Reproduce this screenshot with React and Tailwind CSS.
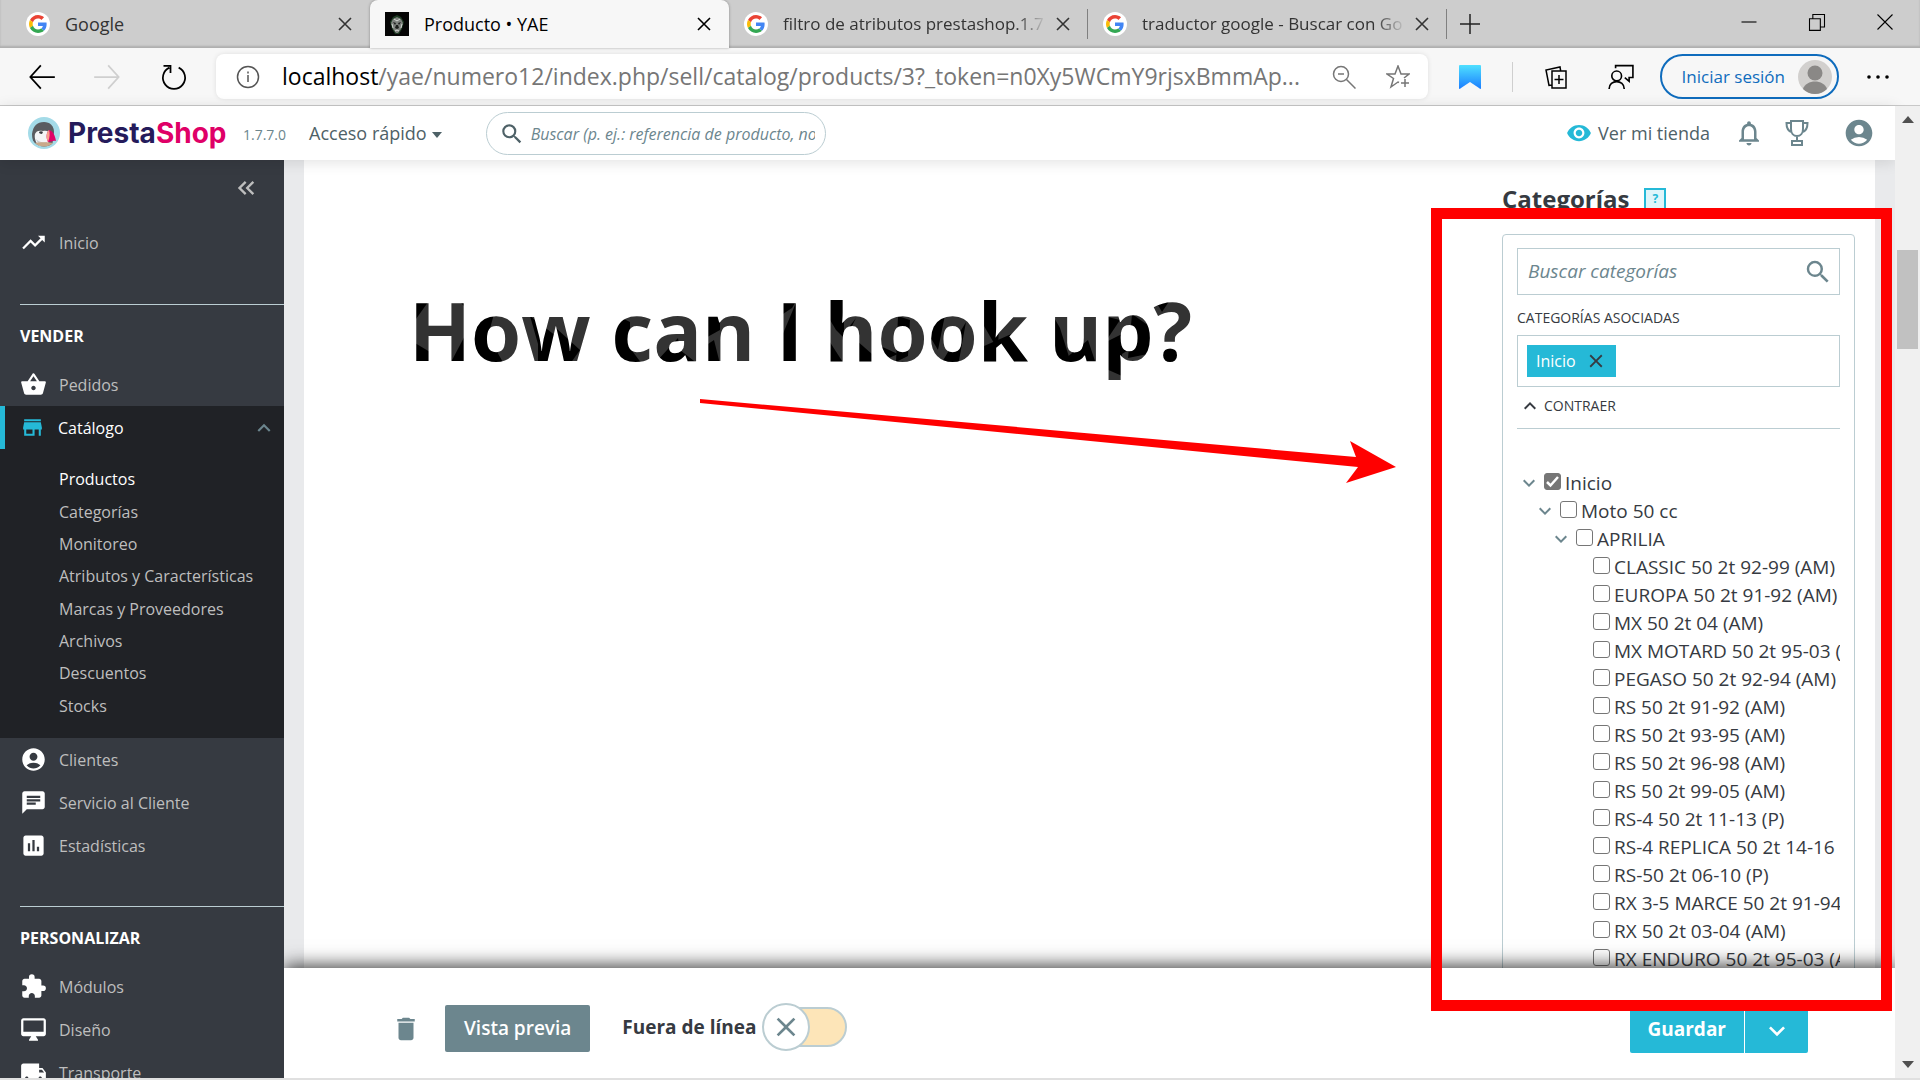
import React from "react";
import {
  MdTrendingUp, MdShoppingBasket, MdStore, MdAccountCircle, MdChat, MdAssessment, MdExtension,
  MdLocalShipping, MdKeyboardArrowUp, MdKeyboardArrowDown, MdSearch, MdVisibility,
  MdDelete, MdClose, MdNotificationsNone, MdKeyboardDoubleArrowLeft,
} from "react-icons/md";

function GoogleIcon() {
  return (
    <svg viewBox="0 0 24 24" className="size-6 shrink-0" aria-hidden="true">
      <circle cx="12" cy="12" r="12" fill="#fff" />
      <g transform="translate(3 3) scale(0.375)">
        <path fill="#EA4335" d="M24 9.5c3.54 0 6.71 1.22 9.21 3.6l6.85-6.85C35.9 2.38 30.47 0 24 0 14.62 0 6.51 5.38 2.56 13.22l7.98 6.19C12.43 13.72 17.74 9.5 24 9.5z" />
        <path fill="#4285F4" d="M46.98 24.55c0-1.57-.15-3.09-.38-4.55H24v9.02h12.94c-.58 2.96-2.26 5.48-4.78 7.18l7.73 6c4.51-4.18 7.09-10.36 7.09-17.65z" />
        <path fill="#FBBC05" d="M10.53 28.59c-.48-1.45-.76-2.99-.76-4.59s.27-3.14.76-4.59l-7.98-6.19C.92 16.46 0 20.12 0 24c0 3.88.92 7.54 2.56 10.78l7.97-6.19z" />
        <path fill="#34A853" d="M24 48c6.48 0 11.93-2.13 15.89-5.81l-7.73-6c-2.15 1.45-4.92 2.3-8.16 2.3-6.26 0-11.57-4.22-13.47-9.91l-7.98 6.19C6.51 42.62 14.62 48 24 48z" />
      </g>
    </svg>
  );
}

function LionIcon() {
  return (
    <svg viewBox="0 0 24 24" className="size-6 shrink-0" aria-hidden="true">
      <rect width="24" height="24" fill="#050505" />
      <path d="M12 3 16 5l3 5-2 7-3 5h-4l-3-5-2-7 3-5z" fill="#1d3a22" />
      <path d="M12 5 16 7l2 4-2 6-3 4h-2l-3-4-2-6 2-4z" fill="#7d817d" />
      <path d="m8 10 3 1-1 2zM16 10l-3 1 1 2zM11 13h2l1 3-2 1-2-1z" fill="#1c1f1c" />
      <path d="m9 7 3 2 3-2M7 12l1 4M17 12l-1 4M10 19l2-1 2 1" stroke="#d5d8d5" strokeWidth="1" fill="none" />
    </svg>
  );
}

function Line({ children, className = "size-6", width = 1.5 }) {
  return (
    <svg viewBox="0 0 24 24" className={"shrink-0 " + className} fill="none" stroke="currentColor" strokeWidth={width} aria-hidden="true">
      {children}
    </svg>
  );
}

const Cross = ({ className, width = 2 }) => <Line className={className} width={width}><path d="m3 3 18 18M21 3 3 21" /></Line>;

function Tab({ icon, title, active, fade }) {
  return (
    <div
      className={
        "flex h-12 w-[359px] items-center pl-[15px] " +
        (active ? "z-10 rounded-t-lg bg-[#f7f7f7] pr-[17px] shadow-[0_0_3px_rgba(0,0,0,0.35)]" : "pr-[17px]")
      }
    >
      {icon}
      <span
        className={
          "ml-[15px] min-w-0 flex-1 overflow-hidden leading-6 whitespace-nowrap " +
          (active ? "text-lg text-black" : fade ? "mr-2 text-[17px] text-[#333] [mask-image:linear-gradient(90deg,#000_88%,transparent)]" : "text-lg text-[#333]")
        }
      >
        {title}
      </span>
      <button type="button" aria-label={"Cerrar " + title} className={active ? "text-black" : "text-[#333]"}>
        <Cross className="size-4" width={2.4} />
      </button>
    </div>
  );
}

function TabBar() {
  return (
    <div className="flex h-12 shrink-0 items-center bg-[#cdcdcd] pl-[11px] shadow-[inset_0_-2px_2px_rgba(0,0,0,0.15)]">
      <Tab icon={<GoogleIcon />} title="Google" />
      <Tab icon={<LionIcon />} title="Producto • YAE" active />
      <Tab icon={<GoogleIcon />} title="filtro de atributos prestashop.1.7" fade />
      <span className="-ml-px h-[30px] w-px bg-[#808080]" />
      <Tab icon={<GoogleIcon />} title="traductor google - Buscar con Go" fade />
      <span className="-ml-px h-[30px] w-px bg-[#808080]" />
      <button type="button" aria-label="Nueva pestaña" className="ml-[11px] text-[#222]">
        <Line><path d="M12 2v20M2 12h20" /></Line>
      </button>
      <div className="mb-1 ml-auto flex items-center gap-[48px] pr-[25px] text-black">
        <button type="button" aria-label="Minimizar"><Line className="size-5" width={1.3}><path d="M3 12h18" /></Line></button>
        <button type="button" aria-label="Restaurar"><Line className="size-5" width={1.3}><path d="M3 8h13v14H3zM7 8V3h14v15h-5" /></Line></button>
        <button type="button" aria-label="Cerrar ventana"><Cross className="size-5" width={1.3} /></button>
      </div>
    </div>
  );
}

function AddressBar() {
  return (
    <div className="flex h-[58px] shrink-0 items-center border-b border-[#c8c8c8] bg-[#f7f7f7] pr-[30px] pl-[28px]">
      <button type="button" aria-label="Atrás"><Line className="size-7"><path d="M23 12H2M11 2 2 12l9 10" /></Line></button>
      <button type="button" aria-label="Adelante" className="ml-[37px] text-[#cfcfcf]"><Line className="size-7"><path d="M1 12h21M13 2l9 10-9 10" /></Line></button>
      <button type="button" aria-label="Actualizar" className="ml-[39px]">
        <Line className="size-7"><path d="M8 4A9.500 9.500 0 1 0 16 4M3 2.500h6v6" /></Line>
      </button>
      <div className="ml-[28px] flex h-[45px] min-w-0 flex-1 items-center rounded-lg bg-white pr-[18px] pl-[20px] text-[#767676] shadow-[0_0_5px_rgba(0,0,0,0.1)]">
        <Line className="size-6 text-[#555]"><circle cx="12" cy="12" r="10.500" /><path d="M12 10v7M12 6.500v2" /></Line>
        <span className="ml-[22px] min-w-0 flex-1 overflow-hidden text-[23px] whitespace-nowrap">
          <span className="text-black">localhost</span>/yae/numero12/index.php/sell/catalog/products/3?_token=n0Xy5WCmY9rjsxBmmAp...
        </span>
        <button type="button" aria-label="Alejar"><Line><circle cx="9" cy="9" r="7.500" /><path d="m14.500 14.500 9 9M6 9h6" /></Line></button>
        <button type="button" aria-label="Añadir a favoritos" className="ml-[30px]">
          <Line><path d="M13 17.500 12 17l-7 5 2.500-8.500L1 9h8l3-8 3 8h8l-5 4M19 14v8M15 18h8" /></Line>
        </button>
      </div>
      <svg viewBox="0 0 24 26" className="ml-[30px] h-[26px] w-6 shrink-0" aria-hidden="true">
        <defs><linearGradient id="bm" x1="0" y1="0" x2="0" y2="1"><stop offset="0" stopColor="#4fe0ff" /><stop offset="1" stopColor="#1a7dff" /></linearGradient></defs>
        <path d="M1 2q0-1 1-1h20q1 0 1 1v22q0 2-2 0l-9-6-9 6q-2 2-2 0z" fill="url(#bm)" />
      </svg>
      <span className="ml-[30px] h-[30px] w-px bg-[#cfcfcf]" />
      <button type="button" aria-label="Colecciones" className="ml-[31px]">
        <Line><path d="M8 6h14v17H8zM15 10v9M10.500 14.500h9M8 20l-3 .500L2 5l14-3 .700 4" /></Line>
      </button>
      <button type="button" aria-label="Comentarios" className="ml-[40px]">
        <Line className="size-[26px]"><circle cx="8" cy="11" r="4.500" /><path d="M1 23c0-9 14-9 14 0M7 4V1.500h16v11h-3.500V16l-4-3.500" /></Line>
      </button>
      <button type="button" className="ml-[26px] flex h-[45px] shrink-0 items-center rounded-full border-2 border-[#0f6cbd] pr-[5px] pl-[20px] text-[17px] whitespace-nowrap text-[#0f6cbd]">
        Iniciar sesión
        <svg viewBox="0 0 34 34" className="ml-[13px] size-[34px]" aria-hidden="true">
          <circle cx="17" cy="17" r="17" fill="#d2d0ce" />
          <circle cx="17" cy="13" r="7.500" fill="#8a8886" />
          <path d="M5 29c3-10 21-10 24 0a17 17 0 0 1-24 0z" fill="#8a8886" />
        </svg>
      </button>
      <button type="button" aria-label="Configuración y más" className="ml-[27px]">
        <svg viewBox="0 0 24 6" className="h-[6px] w-6" aria-hidden="true"><circle cx="3" cy="3" r="1.800" /><circle cx="12" cy="3" r="1.800" /><circle cx="21" cy="3" r="1.800" /></svg>
      </button>
    </div>
  );
}

function Puffin() {
  return (
    <svg viewBox="0 0 32 32" className="size-8" aria-hidden="true">
      <defs><clipPath id="disc"><circle cx="16" cy="16" r="13.500" /></clipPath></defs>
      <circle cx="16" cy="16" r="16" fill="#a4dbe8" />
      <g clipPath="url(#disc)">
        <path d="M4 17C5 9 9 5 16 5c6 0 10 4 10 10l-2 15H8C5 26 4 21 4 17z" fill="#5a5c60" />
        <path d="M7 17c1-3 4-4 8-3 3-1 6 0 7 3 1 6-2 8-3 12h-8C8 26 6 21 7 17z" fill="#f4f4f6" />
        <path d="M8 22c3 3 7 4 11 3l-1 4h-7z" fill="#c9ccd0" />
        <path d="M6 26c6-1 14-1 20 0v6H6z" fill="#c9a98a" />
      </g>
      <path d="M11 15c1-1 3-1 4 0l-1 2c-2 0-3-1-3-2z" fill="#3a3c42" />
      <path d="M21 13c4 1 6 5 7 11-3-1-5 1-8 1-2-4-2-9 1-12z" fill="#df0067" />
      <path d="M21 13c1 3 1 7-1 12-2-4-2-9 1-12z" fill="#f7a08b" />
    </svg>
  );
}

function Trophy() {
  return (
    <svg viewBox="0 0 24 28" className="h-7 w-6" fill="none" stroke="#6c868e" strokeWidth="2" aria-hidden="true">
      <path d="M6 2h12v8c0 4-2.500 7-6 7s-6-3-6-7zM6 4H1.500c0 5 1.500 8 5 9M18 4h4.500c0 5-1.500 8-5 9M12 17v5M7 22h10v4H7z" />
    </svg>
  );
}

function Monitor({ className }) {
  return (
    <svg viewBox="0 0 24 24" className={className} fill="currentColor" aria-hidden="true">
      <path fillRule="evenodd" d="M21 2H3c-1.100 0-2 .900-2 2v12c0 1.100.900 2 2 2h7l-2 3v1h8v-1l-2-3h7c1.100 0 2-.900 2-2V4c0-1.100-.900-2-2-2zm0 12H3V4h18z" />
    </svg>
  );
}

function ShopHeader() {
  return (
    <header className="relative z-30 flex h-[54px] shrink-0 items-center bg-white pr-[20px] pl-[28px] text-[#363a41] shadow-[0_2px_14px_rgba(0,0,0,0.12)]">
      <a href="#inicio" className="flex items-center">
        <Puffin />
        <span className="ml-2 w-[160px] font-['Inter'] text-[28px] leading-8 font-bold text-[#251b5b]">Presta<span className="text-[#df0067]">Shop</span></span>
      </a>
      <span className="mt-1 ml-[15px] text-sm text-[#6c868e]">1.7.7.0</span>
      <button type="button" className="ml-[23px] flex items-center text-lg text-[#4e6167]">
        Acceso rápido
        <svg viewBox="0 0 10 6" className="mt-1 ml-[5px] h-[6px] w-[10px]" aria-hidden="true"><path d="M0 0h10L5 6z" fill="#4e6167" /></svg>
      </button>
      <label className="mt-px ml-[44px] flex h-[43px] w-[340px] items-center rounded-full border border-[#bbcdd2] pr-[10px] pl-3">
        <MdSearch className="size-[26px] shrink-0 text-[#4e6167]" />
        <input aria-label="Buscar" placeholder="Buscar (p. ej.: referencia de producto, nombre)" className="ml-[6px] min-w-0 flex-1 text-base italic outline-none placeholder:text-[#6c868e]" />
      </label>
      <a href="#tienda" className="ml-auto flex items-center text-lg text-[#4e6167]">
        <MdVisibility className="mr-[6px] size-[26px] text-[#25b9d7]" />Ver mi tienda
      </a>
      <button type="button" aria-label="Notificaciones" className="ml-[24px]"><MdNotificationsNone className="size-[30px] text-[#6c868e]" /></button>
      <button type="button" aria-label="Logros" className="ml-[21px]"><Trophy /></button>
      <button type="button" aria-label="Cuenta" className="ml-[34px]"><MdAccountCircle className="size-8 text-[#6c868e]" /></button>
    </header>
  );
}

function NavItem({ icon: Icon, children }) {
  return (
    <a href="#menu" className="flex h-[43px] items-center pl-5 text-base text-[#bebebe]">
      <Icon className="mr-[12px] size-[27px] text-white" />
      {children}
    </a>
  );
}

const submenu = ["Productos", "Categorías", "Monitoreo", "Atributos y Características", "Marcas y Proveedores", "Archivos", "Descuentos", "Stocks"];

function Sidebar() {
  return (
    <nav className="relative z-20 w-[284px] shrink-0 overflow-hidden bg-[#363a41]">
      <div className="flex h-[56px] items-center justify-end pr-[24px]">
        <button type="button" aria-label="Contraer menú"><MdKeyboardDoubleArrowLeft className="size-7 text-[#bebebe]" /></button>
      </div>
      <div className="mt-[5px] h-[83px]"><NavItem icon={MdTrendingUp}>Inicio</NavItem></div>
      <div className="ml-5 border-t border-[#bbcdd2]" />
      <h2 className="mt-[19px] mb-[15px] ml-5 text-base font-bold text-white">VENDER</h2>
      <NavItem icon={MdShoppingBasket}>Pedidos</NavItem>
      <div className="bg-[#202226] pb-4">
        <a href="#catalogo" className="flex h-[43px] items-center border-l-[5px] border-[#25b9d7] pr-[7px] pl-[15px] text-base font-medium text-white">
          <MdStore className="mr-[13px] size-[25px] text-[#25b9d7]" />
          Catálogo
          <MdKeyboardArrowUp className="ml-auto size-[26px] text-[#6c868e]" />
        </a>
        <ul className="mt-[14px] grid h-[259px] grid-rows-8">
          {submenu.map((name, i) => (
            <li key={name} className="flex items-center pl-[59px] text-base">
              <a href="#submenu" className={i === 0 ? "font-medium text-white" : "text-[#bebebe]"}>{name}</a>
            </li>
          ))}
        </ul>
      </div>
      <NavItem icon={MdAccountCircle}>Clientes</NavItem>
      <NavItem icon={MdChat}>Servicio al Cliente</NavItem>
      <NavItem icon={MdAssessment}>Estadísticas</NavItem>
      <div className="mt-[39px] ml-5 border-t border-[#bbcdd2]" />
      <h2 className="mt-[19px] mb-[15px] ml-5 text-base font-bold text-white">PERSONALIZAR</h2>
      <NavItem icon={MdExtension}>Módulos</NavItem>
      <NavItem icon={Monitor}>Diseño</NavItem>
      <NavItem icon={MdLocalShipping}>Transporte</NavItem>
    </nav>
  );
}

const models = [
  "CLASSIC 50 2t 92-99 (AM)", "EUROPA 50 2t 91-92 (AM)", "MX 50 2t 04 (AM)", "MX MOTARD 50 2t 95-03 (AM)",
  "PEGASO 50 2t 92-94 (AM)", "RS 50 2t 91-92 (AM)", "RS 50 2t 93-95 (AM)", "RS 50 2t 96-98 (AM)",
  "RS 50 2t 99-05 (AM)", "RS-4 50 2t 11-13 (P)", "RS-4 REPLICA 50 2t 14-16 (P)", "RS-50 2t 06-10 (P)",
  "RX 3-5 MARCE 50 2t 91-94 (AM)", "RX 50 2t 03-04 (AM)", "RX ENDURO 50 2t 95-03 (AM)",
];

const checkClass =
  "mb-1 size-[17px] shrink-0 appearance-none rounded-[3px] border border-[#767676] bg-white checked:bg-[#767676]";

function TreeRow({ label, branch, checked }) {
  return (
    <div className="flex h-7 items-center whitespace-nowrap">
      {branch && (
        <button type="button" aria-label={"Contraer " + label} className="mr-[3px]">
          <MdKeyboardArrowDown className="size-6 text-[#6c868e]" />
        </button>
      )}
      <label className="flex items-center">
        <span className="relative flex">
          <input type="checkbox" defaultChecked={checked} className={checkClass} />
          {checked && (
            <svg viewBox="0 0 17 17" className="pointer-events-none absolute top-0 left-0 size-[17px]" fill="none" stroke="#fff" strokeWidth="2.500" aria-hidden="true">
              <path d="m3 9 3.500 3.500L14 4" />
            </svg>
          )}
        </span>
        <span className="ml-1 text-[19px] leading-7">{label}</span>
      </label>
    </div>
  );
}

function Categories() {
  return (
    <section className="ml-auto w-[353px] shrink-0 text-[#363a41]">
      <h3 className="mt-[24px] flex h-[30px] items-center text-2xl font-bold">
        Categorías
        <button type="button" aria-label="Ayuda" className="ml-[15px] flex size-[22px] items-center justify-center border-2 border-[#25b9d7] bg-[#dff5fa] text-xs font-bold text-[#25b9d7]">?</button>
      </h3>
      <div className="mt-5 h-[900px] rounded border border-[#bbcdd2] px-[14px] pt-[13px]">
        <label className="flex h-[47px] items-center border border-[#bbcdd2] pr-[6px] pl-[10px]">
          <input aria-label="Buscar categorías" placeholder="Buscar categorías" className="min-w-0 flex-1 text-[19px] italic outline-none placeholder:text-[#6c868e]" />
          <MdSearch className="size-[30px] text-[#6c868e]" />
        </label>
        <h4 className="mt-[13px] text-sm font-medium">CATEGORÍAS ASOCIADAS</h4>
        <div className="mt-[7px] flex h-[52px] items-center border border-[#bbcdd2] pl-[9px]">
          <span className="flex h-8 items-center bg-[#25b9d7] pr-[9px] pl-[9px] text-base text-white">
            Inicio
            <button type="button" aria-label="Quitar Inicio" className="ml-[9px]"><MdClose className="size-[22px] text-[#363a41]" /></button>
          </span>
        </div>
        <button type="button" className="mt-[9px] flex h-5 items-center pl-px text-sm font-medium">
          <MdKeyboardArrowUp className="mr-[2px] size-6" />CONTRAER
        </button>
        <div className="mt-[12px] border-t border-[#bbcdd2]" />
        <div className="mt-[40px] overflow-hidden">
          <TreeRow label="Inicio" branch checked />
          <div className="pl-4">
            <TreeRow label="Moto 50 cc" branch />
            <div className="pl-4">
              <TreeRow label="APRILIA" branch />
              <div className="pl-[44px]">{models.map((m) => <TreeRow key={m} label={m} />)}</div>
            </div>
          </div>
        </div>
      </div>
    </section>
  );
}

const facets = [
  "30,28 51,28 31,56", "30,70 50,82 50,94 30,94", "70,94 90,56 90,94", "74,26 90,26 90,42",
  "94,44 114,44 108,66 124,94 92,94", "150,46 176,66 186,92 158,94 158,74", "176,58 200,80 190,94 176,94",
  "234,44 250,52 250,78 262,94 234,94", "276,92 298,68 300,80 318,94", "322,46 340,46 340,60 322,70",
  "322,94 322,78 334,70 340,94", "400,30 418,28 412,38 400,46", "402,66 418,28 418,94 400,94",
  "450,26 464,26 464,68 456,60 450,50", "446,66 464,94 446,94", "462,66 476,48 470,60", "476,70 492,84 492,94 476,94",
  "496,74 518,84 500,92", "518,46 530,50 528,86 516,92", "546,60 566,40 558,80", "562,92 586,52 578,96 546,96",
  "604,26 620,26 618,80 604,56", "604,76 636,62 656,94 604,94", "672,44 680,58 690,90 680,96 672,76",
  "686,88 708,70 716,94 686,94", "724,46 740,50 728,68", "722,74 742,64 762,72 742,84 742,106 724,98",
  "752,44 772,58 768,84 748,88", "775,30 790,30 782,42", "778,78 802,80 798,94 784,94",
];

function Headline() {
  return (
    <h1 className="pt-[110px] pl-[76px]">
      <svg viewBox="0 0 840 120" className="h-[120px] w-[840px]" role="img" aria-label="How can I hook up?">
        <defs>
          <pattern id="facets" patternUnits="userSpaceOnUse" width="840" height="120">
            <rect width="840" height="120" fill="#333" />
            {facets.map((p) => <polygon key={p} points={p} fill="#000" />)}
          </pattern>
        </defs>
        <text x="29" y="91" fill="url(#facets)" className="font-['Open_Sans'] text-[81px] font-bold">How can I hook up?</text>
      </svg>
    </h1>
  );
}

function FooterBar() {
  return (
    <footer className="relative z-10 flex h-[110px] shrink-0 items-center bg-white pr-[87px] pl-[107px] text-[19px] text-[#363a41] shadow-[0_-2px_18px_rgba(0,0,0,0.8)]">
      <button type="button" aria-label="Eliminar" className="mt-[12px]"><MdDelete className="size-[30px] text-[#6c868e]" /></button>
      <button type="button" className="mt-[10px] ml-[24px] h-[47px] rounded-[2px] bg-[#6c868e] px-[19px] font-semibold text-white">Vista previa</button>
      <label className="mt-[8px] ml-8 flex items-center font-bold">
        Fuera de línea
        <span className="relative ml-[6px] flex h-[48px] w-[85px] items-center">
          <input type="checkbox" role="switch" className="ml-4 h-[40px] flex-1 appearance-none rounded-full border-2 border-[#bbcdd2] bg-[#fde5b8]" />
          <span className="pointer-events-none absolute left-0 flex size-[48px] items-center justify-center rounded-full border-2 border-[#bbcdd2] bg-white">
            <MdClose className="size-8 text-[#6c868e]" />
          </span>
        </span>
      </label>
      <div className="mt-[12px] ml-auto flex gap-px">
        <button type="button" className="h-[47px] rounded-l-[2px] bg-[#25b9d7] px-[18px] font-bold text-white">Guardar</button>
        <button type="button" aria-label="Más opciones" className="flex h-[47px] w-[63px] items-center justify-center rounded-r-[2px] bg-[#25b9d7] text-white"><MdKeyboardArrowDown className="mt-1 size-8" /></button>
      </div>
    </footer>
  );
}

function Scrollbar() {
  return (
    <div className="relative z-30 flex w-[25px] shrink-0 flex-col items-center bg-[#f0f0f0] py-[10px]" aria-hidden="true">
      <svg viewBox="0 0 12 7" className="h-[7px] w-3"><path d="M0 7 6 0l6 7z" fill="#505050" /></svg>
      <div className="mt-[127px] h-[99px] w-[21px] bg-[#c1c1c1]" />
      <svg viewBox="0 0 12 7" className="mt-auto h-[7px] w-3"><path d="m0 0 6 7 6-7z" fill="#505050" /></svg>
    </div>
  );
}

export default function App() {
  return (
    <div className="flex h-screen flex-col overflow-hidden bg-[#e0e0e0] font-['Open_Sans','Noto_Sans',sans-serif]">
      <TabBar />
      <AddressBar />
      <div className="flex min-h-0 flex-1">
        <div className="flex min-w-0 flex-1 flex-col">
          <ShopHeader />
          <div className="flex min-h-0 flex-1">
            <Sidebar />
            <main className="relative flex min-w-0 flex-1 flex-col bg-[#e9eaec]">
              <div className="min-h-0 flex-1 overflow-hidden px-5">
                <div className="flex bg-white pr-[20px]">
                  <Headline />
                  <Categories />
                </div>
              </div>
              <FooterBar />
              <svg viewBox="0 0 700 90" className="absolute top-[238px] left-[414px] z-20 h-[90px] w-[700px]" aria-hidden="true">
                <path d="M2 1 658 59 652 43 698 69 648 85 660 69 2 5z" fill="#f00" />
              </svg>
              <div className="pointer-events-none absolute top-[48px] right-[3px] z-20 h-[803px] w-[461px] border-[11px] border-[#ff0000]" />
            </main>
          </div>
        </div>
        <Scrollbar />
      </div>
      <div className="relative z-30 h-[2px] shrink-0 bg-[#e0e0e0]" />
    </div>
  );
}
